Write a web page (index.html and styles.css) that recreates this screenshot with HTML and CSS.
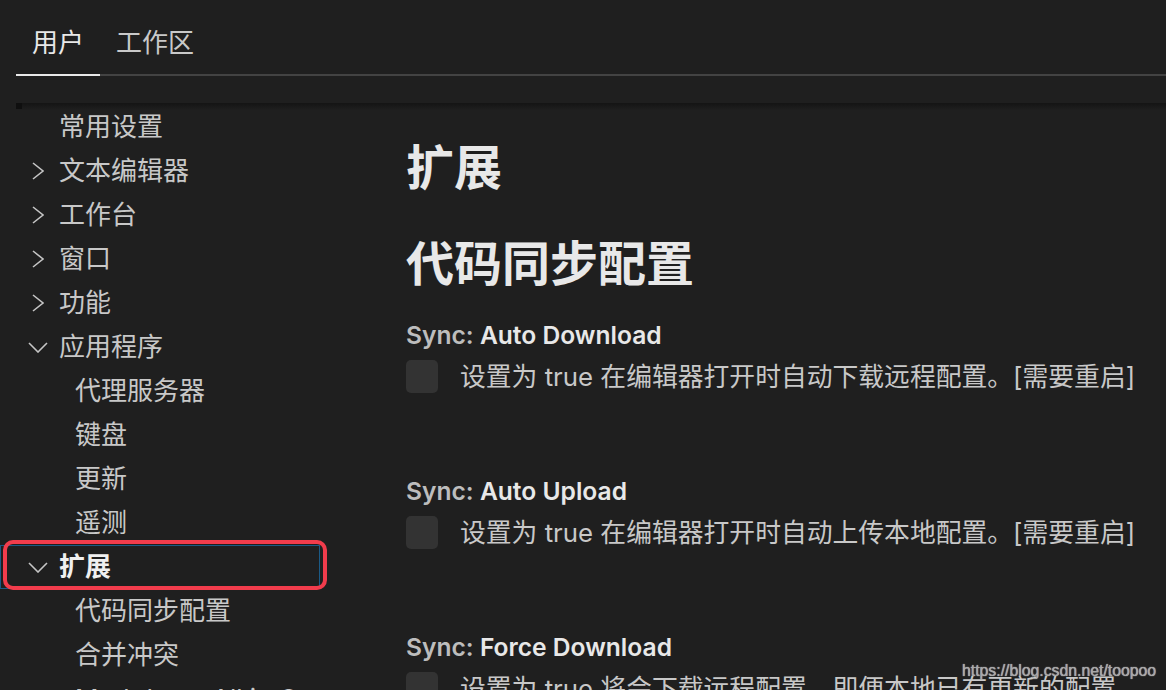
FILE: index.html
```html
<!DOCTYPE html>
<html lang="zh-CN">
<head>
<meta charset="utf-8">
<title>设置</title>
<link rel="stylesheet" href="styles.css">
</head>
<body>
<div class="page">
  <header class="header">
    <nav class="tabs">
      <div class="tab active">用户</div>
      <div class="tab">工作区</div>
      <div class="tab-rest"></div>
    </nav>
  </header>
  <div class="content">
    <div class="shadow"><span class="shadow-corner"></span></div>
    <aside class="sidebar">
      <div class="row l1"><span class="chev"></span><span>常用设置</span></div>
      <div class="row l1"><span class="chev"><svg class="ic-right" width="12" height="18" viewBox="0 0 12 18"><polyline points="1,1 11,9 1,17" /></svg></span><span>文本编辑器</span></div>
      <div class="row l1"><span class="chev"><svg class="ic-right" width="12" height="18" viewBox="0 0 12 18"><polyline points="1,1 11,9 1,17" /></svg></span><span>工作台</span></div>
      <div class="row l1"><span class="chev"><svg class="ic-right" width="12" height="18" viewBox="0 0 12 18"><polyline points="1,1 11,9 1,17" /></svg></span><span>窗口</span></div>
      <div class="row l1"><span class="chev"><svg class="ic-right" width="12" height="18" viewBox="0 0 12 18"><polyline points="1,1 11,9 1,17" /></svg></span><span>功能</span></div>
      <div class="row l1"><span class="chev"><svg class="ic-down" width="20" height="11" viewBox="0 0 20 11"><polyline points="1,1 10,10 19,1" /></svg></span><span>应用程序</span></div>
      <div class="row l2">代理服务器</div>
      <div class="row l2">键盘</div>
      <div class="row l2">更新</div>
      <div class="row l2">遥测</div>
      <div class="row l1 selected"><span class="chev"><svg class="ic-down" width="20" height="11" viewBox="0 0 20 11"><polyline points="1,1 10,10 19,1" /></svg></span><span>扩展</span><span class="annot"></span></div>
      <div class="row l2">代码同步配置</div>
      <div class="row l2">合并冲突</div>
      <div class="row l2">Markdown All in One</div>
    </aside>
    <main class="main">
      <h1 class="h1">扩展</h1>
      <h2 class="h2">代码同步配置</h2>
      <section class="setting">
        <div class="s-title"><span class="cat">Sync: </span><span class="name">Auto Download</span></div>
        <div class="s-row"><span class="checkbox"></span><span class="desc">设置为 true 在编辑器打开时自动下载远程配置。[需要重启]</span></div>
      </section>
      <section class="setting">
        <div class="s-title"><span class="cat">Sync: </span><span class="name">Auto Upload</span></div>
        <div class="s-row"><span class="checkbox"></span><span class="desc">设置为 true 在编辑器打开时自动上传本地配置。[需要重启]</span></div>
      </section>
      <section class="setting">
        <div class="s-title"><span class="cat">Sync: </span><span class="name">Force Download</span></div>
        <div class="s-row"><span class="checkbox"></span><span class="desc">设置为 true 将会下载远程配置，即便本地已有更新的配置。</span></div>
      </section>
    </main>
  </div>
  <div class="watermark">https://blog.csdn.net/toopoo</div>
</div>
</body>
</html>
```
FILE: styles.css
```css
html, body {
  margin: 0;
  padding: 0;
  background: #1f1f1f;
}
body {
  font-family: Inter, "Noto Sans CJK SC", sans-serif;
  color: #c8c8c8;
  overflow: hidden;
}
.page {
  position: relative;
  width: 1166px;
  height: 690px;
  overflow: hidden;
}
.header {
  height: 103px;
  padding-left: 16px;
  box-sizing: border-box;
}
.tabs {
  display: flex;
  height: 76px;
}
.tab {
  font-size: 26px;
  line-height: 62px;
  height: 62px;
  padding: 12px 17px 0 16px;
  color: #c9c9c9;
  border-bottom: 2px solid #434343;
}
.tab.active {
  color: #e8e8e8;
  padding-right: 16px;
  border-bottom-color: #e8e8e8;
}
.tab-rest {
  flex: 1;
  border-bottom: 2px solid #434343;
}
.content {
  position: relative;
  display: flex;
  padding-top: 2px;
}
.shadow {
  position: absolute;
  top: 0;
  left: 16px;
  right: 0;
  height: 7px;
  background: linear-gradient(#141414 0, #171717 30%, #1f1f1f 100%);
}
.shadow-corner {
  display: block;
  width: 6px;
  height: 6px;
  background: #0f0f0f;
}
.sidebar {
  width: 330px;
  flex: none;
}
.row {
  position: relative;
  height: 44px;
  line-height: 44px;
  font-size: 26px;
  color: #c8c8c8;
  white-space: nowrap;
  display: flex;
  align-items: center;
  width: 320px;
  box-sizing: border-box;
}
.row.l1 {
  padding-left: 28px;
}
.row.l2 {
  padding-left: 75px;
}
.chev {
  width: 20px;
  margin-right: 11px;
  display: flex;
  justify-content: center;
  align-items: center;
  flex: none;
}
.chev svg {
  display: block;
  fill: none;
  stroke: #c5c5c5;
  stroke-width: 1.6;
}
.row.selected {
  font-weight: 700;
  color: #f0f0f0;
  outline: 1px solid #1b5a86;
  outline-offset: -1px;
}
.annot {
  position: absolute;
  left: 3px;
  top: -5px;
  width: 324px;
  height: 50px;
  box-sizing: border-box;
  border: 4px solid #f23c4c;
  border-radius: 10px;
}
.main {
  flex: 1;
  padding-left: 76px;
  padding-top: 33px;
}
.h1, .h2 {
  margin: 0;
  font-size: 48px;
  line-height: 60px;
  font-weight: 700;
  color: #e8e8e8;
}
.h2 {
  margin-top: 36px;
  margin-bottom: 23px;
}
.setting {
  height: 156px;
}
.s-title {
  font-size: 24.6px;
  line-height: 36px;
  font-weight: 600;
  white-space: nowrap;
}
.cat {
  color: #bdbdbd;
}
.name {
  color: #e8e8e8;
}
.s-row {
  display: flex;
  align-items: center;
  margin-top: 7px;
  height: 33px;
}
.checkbox {
  width: 32px;
  height: 33px;
  background: #333333;
  border-radius: 5px;
  flex: none;
  margin-right: 22px;
}
.desc {
  font-size: 25.8px;
  line-height: 33px;
  color: #c8c8c8;
  white-space: nowrap;
}
.watermark {
  position: absolute;
  left: 962px;
  top: 661px;
  font-family: "Liberation Sans", Arial, sans-serif;
  font-size: 15.8px;
  line-height: 20px;
  color: #a8a8a8;
  text-shadow: 0 0 1px #e0e0e0;
}
```
